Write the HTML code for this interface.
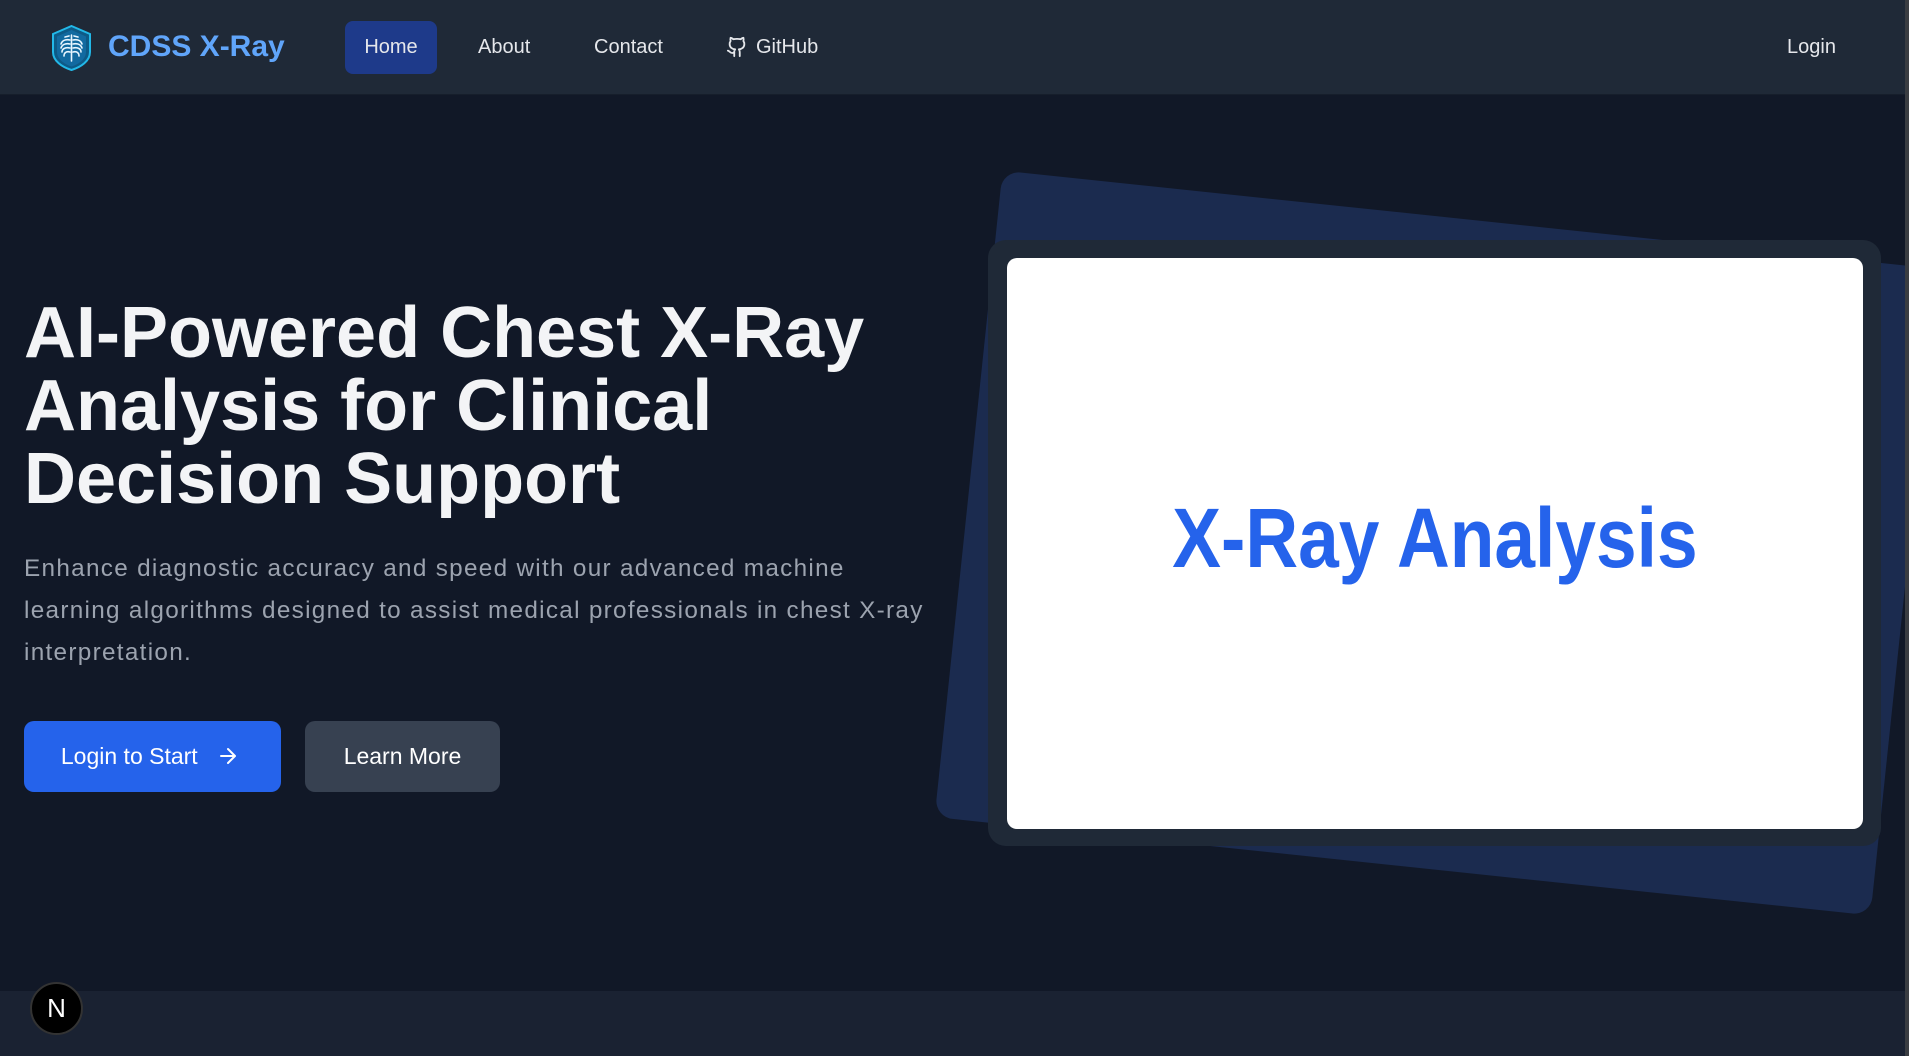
<!DOCTYPE html>
<html><head><meta charset="utf-8"><style>
*{margin:0;padding:0;box-sizing:border-box}
html,body{width:1909px;height:1056px;overflow:hidden;background:#111827;font-family:"Liberation Sans",Arial,sans-serif}
#wrap{position:absolute;left:0;top:0;width:1905px;height:1056px;overflow:hidden;background:#111827}
#sb{position:absolute;left:1905px;top:0;width:4px;height:1056px;background:#3a3d42}
nav{position:absolute;left:0;top:0;width:1905px;height:95px;background:#1f2937;border-bottom:1px solid #161e2b}
.logo{position:absolute;left:51px;top:25px}
.brand{position:absolute;left:108px;top:28px;font-size:30px;font-weight:bold;color:#60a5fa;line-height:38px}
.nl{position:absolute;top:21px;height:53px;line-height:53px;font-size:20px;color:#e5e7eb}
.home{left:345px;width:92px;background:#1e3a8a;border-radius:8px;text-align:center}
h1{position:absolute;left:24px;top:297px;font-size:72px;line-height:73px;color:#f3f4f6;font-weight:bold;width:900px}
p.sub{position:absolute;left:24px;top:548px;font-size:24.3px;line-height:42px;color:#9ca3af;white-space:nowrap;letter-spacing:1.3px}
.btn{position:absolute;top:721px;height:71px;border-radius:10px;color:#fff;font-size:23px;line-height:71px;text-align:center}
.b1{left:24px;width:257px;background:#2563eb}
.b2{left:305px;width:195px;background:#374151}
.back{position:absolute;left:966px;top:218px;width:941px;height:650px;background:#1b2b4f;border-radius:18px;transform:rotate(6deg)}
.frame{position:absolute;left:988px;top:240px;width:893px;height:606px;background:#1f2937;border-radius:18px}
.white{position:absolute;left:1007px;top:258px;width:856px;height:571px;background:#fff;border-radius:10px;display:flex;align-items:center;justify-content:center}
.white span{color:#2563eb;font-size:84px;font-weight:bold;margin-top:-10px;display:inline-block;transform:scaleX(0.87);white-space:nowrap}
footer{position:absolute;left:0;top:991px;width:1905px;height:65px;background:#1a2232}
.n{position:absolute;left:30px;top:982px;width:53px;height:53px;border-radius:50%;background:#000;border:2px solid #333;color:#fff;font-size:26px;line-height:49px;text-align:center}
</style></head><body>
<div id="wrap">
<nav>
<svg class="logo" width="41" height="46" viewBox="0 0 41 46">
<path d="M20.5 1 L39 9 V27 C39 36 30 42 20.5 45 C11 42 2 36 2 27 V9 Z" fill="#0e5a86" stroke="#22b8e8" stroke-width="2"/>
<path d="M20.5 5 L35 11.5 V27 C35 34 28 39 20.5 41.5 C13 39 6 34 6 27 V11.5 Z" fill="#126aa0"/>
<g stroke="#e8f6ff" stroke-width="1.6" fill="none" stroke-linecap="round">
<line x1="20.5" y1="10" x2="20.5" y2="36"/>
<path d="M19 15 C14 14 11 16 10 19 M22 15 C27 14 30 16 31 19"/>
<path d="M19 19 C14 18 11 20 10 23 M22 19 C27 18 30 20 31 23"/>
<path d="M19 23 C14 22 11 24 11 27 M22 23 C27 22 30 24 30 27"/>
<path d="M19 27 C15 26 13 28 13 31 M22 27 C26 26 28 28 28 31"/>
<path d="M14 12 L18 11 M27 12 L23 11"/>
</g>
</svg>
<div class="brand">CDSS X-Ray</div>
<div class="nl home">Home</div>
<div class="nl" style="left:478px">About</div>
<div class="nl" style="left:594px">Contact</div>
<svg style="position:absolute;left:726px;top:36px" width="22" height="22" viewBox="0 0 24 24" fill="none" stroke="#e5e7eb" stroke-width="2" stroke-linecap="round" stroke-linejoin="round"><path d="M15 22v-4a4.8 4.8 0 0 0-1-3.5c3 0 6-2 6-5.5.08-1.25-.27-2.480-1-3.5.28-1.15.28-2.350 0-3.5 0 0-1 0-3 1.5-2.640-.5-5.360-.5-8 0C6 2 5 2 5 2c-.3 1.15-.3 2.350 0 3.5A5.403 5.403 0 0 0 4 9c0 3.5 3 5.5 6 5.5-.39.49-.68 1.050-.85 1.650-.17.6-.22 1.230-.15 1.850v4"/><path d="M9 18c-4.510 2-5-2-7-2"/></svg>
<div class="nl" style="left:756px">GitHub</div>
<div class="nl" style="left:1787px">Login</div>
</nav>
<h1>AI-Powered Chest X-Ray Analysis for Clinical Decision Support</h1>
<p class="sub">Enhance diagnostic accuracy and speed with our advanced machine<br>learning algorithms designed to assist medical professionals in chest X-ray<br>interpretation.</p>
<div class="btn b1" style="padding-right:4px">Login to Start <svg style="vertical-align:-4px;margin-left:12px" width="24" height="24" viewBox="0 0 24 24" fill="none" stroke="#fff" stroke-width="2" stroke-linecap="round" stroke-linejoin="round"><path d="M5 12h14M12 5l7 7-7 7"/></svg></div>
<div class="btn b2">Learn More</div>
<div class="back"></div>
<div class="frame"></div>
<div class="white"><span>X-Ray Analysis</span></div>
<footer></footer>
<div class="n">N</div>
</div>
<div id="sb"></div>
</body></html>
